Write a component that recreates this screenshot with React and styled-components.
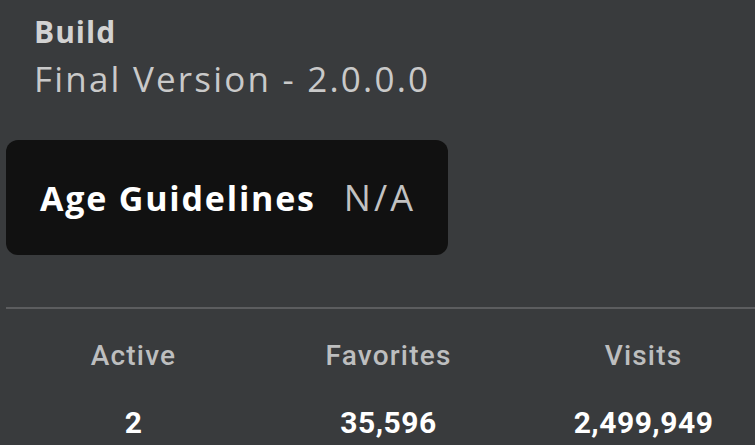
import React from "react";
import styled, { createGlobalStyle } from "styled-components";

const GlobalStyle = createGlobalStyle`
  html, body {
    margin: 0;
    padding: 0;
    background: #393b3d;
    overflow: hidden;
  }
  body {
    font-family: "Open Sans", "Noto Sans", sans-serif;
  }
`;

const stats = [
  { label: "Active", value: "2" },
  { label: "Favorites", value: "35,596" },
  { label: "Visits", value: "2,499,949" },
];

export default function App() {
  return (
    <>
      <GlobalStyle />
      <Page>
        <Header>
          <Title>Build</Title>
          <Version>Final Version - 2.0.0.0</Version>
        </Header>
        <AgeCard>
          <AgeLabel>Age Guidelines</AgeLabel>
          <AgeValue>N/A</AgeValue>
        </AgeCard>
        <Divider />
        <StatsRow>
          {stats.map((s) => (
            <Stat key={s.label}>
              <StatLabel>{s.label}</StatLabel>
              <StatValue>{s.value}</StatValue>
            </Stat>
          ))}
        </StatsRow>
      </Page>
    </>
  );
}

const Page = styled.div`
  width: 755px;
  height: 445px;
  padding: 0 0 0 6px;
  box-sizing: border-box;
  display: flex;
  flex-direction: column;
`;

const Header = styled.div`
  padding: 12px 0 0 28px;
  display: flex;
  flex-direction: column;
`;

const Title = styled.div`
  font-size: 30px;
  font-weight: 700;
  line-height: 40px;
  letter-spacing: 1px;
  color: #d2d2d2;
`;

const Version = styled.div`
  margin-top: 5px;
  font-size: 35px;
  font-weight: 400;
  line-height: 44px;
  letter-spacing: 2.2px;
  color: #c9c9c9;
`;

const AgeCard = styled.div`
  margin-top: 39px;
  width: 442px;
  height: 115px;
  box-sizing: border-box;
  background: #111111;
  border-radius: 12px;
  display: flex;
  align-items: center;
  gap: 28px;
  padding: 0 0 0 34px;
`;

const AgeLabel = styled.span`
  font-size: 34px;
  font-weight: 700;
  letter-spacing: 1.8px;
  color: #ffffff;
`;

const AgeValue = styled.span`
  font-size: 36px;
  font-weight: 400;
  letter-spacing: 3px;
  color: #c2c2c2;
`;

const Divider = styled.div`
  margin-top: 52px;
  height: 2px;
  background: #5c5d5f;
`;

const StatsRow = styled.div`
  display: grid;
  grid-template-columns: repeat(3, 255px);
  padding-top: 30px;
`;

const Stat = styled.div`
  display: flex;
  flex-direction: column;
  align-items: center;
  gap: 32px;
  font-family: Roboto, "Liberation Sans", sans-serif;
`;

const StatLabel = styled.div`
  font-size: 28px;
  line-height: 34px;
  font-weight: 500;
  letter-spacing: 1.2px;
  color: #bdbebf;
`;

const StatValue = styled.div`
  font-size: 30px;
  line-height: 36px;
  font-weight: 700;
  letter-spacing: 0.5px;
  color: #ffffff;
`;
